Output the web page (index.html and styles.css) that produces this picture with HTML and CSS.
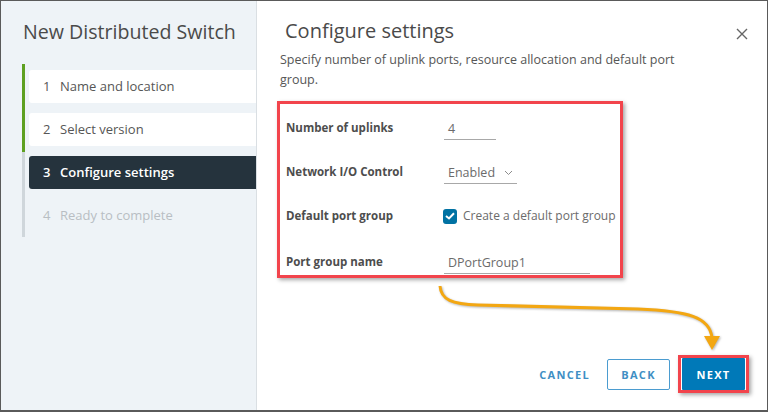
FILE: index.html
```html
<!DOCTYPE html>
<html lang="en">
<head>
    <meta charset="UTF-8">
    <title>New Distributed Switch</title>
    <link rel="stylesheet" href="styles.css">
</head>
<body>
    <div class="frame">
        <div class="sidebar">
            <h1 class="wizard-title">New Distributed Switch</h1>
            <ul class="steps">
                <li class="step done"><span class="num">1</span>Name and location</li>
                <li class="step done"><span class="num">2</span>Select version</li>
                <li class="step active"><span class="num">3</span>Configure settings</li>
                <li class="step todo"><span class="num">4</span>Ready to complete</li>
            </ul>
        </div>

        <div class="content">
            <div class="header">
                <h2 class="page-title">Configure settings</h2>
                <svg class="close" width="12" height="12" viewBox="0 0 12 12">
                    <path d="M1 1 L11 11 M11 1 L1 11" stroke="#666" stroke-width="1.4" fill="none"/>
                </svg>
            </div>
            <p class="desc">Specify number of uplink ports, resource allocation and default port group.</p>

            <div class="form highlight">
                <div class="row">
                    <label>Number of uplinks</label>
                    <div class="field short">4</div>
                </div>
                <div class="row">
                    <label>Network I/O Control</label>
                    <div class="field select">Enabled
                        <svg width="9" height="6" viewBox="0 0 9 6"><path d="M1 1 L4.5 4.5 L8 1" stroke="#8c8c8c" stroke-width="1" fill="none"/></svg>
                    </div>
                </div>
                <div class="row">
                    <label>Default port group</label>
                    <div class="check">
                        <span class="box">
                            <svg width="10" height="8" viewBox="0 0 10 8"><path d="M1 4 L4 6.5 L9 1.2" stroke="#fff" stroke-width="2" fill="none"/></svg>
                        </span>
                        Create a default port group
                    </div>
                </div>
                <div class="row last">
                    <label>Port group name</label>
                    <div class="field long">DPortGroup1</div>
                </div>
            </div>

            <div class="footer">
                <span class="btn link">CANCEL</span>
                <span class="btn outline">BACK</span>
                <span class="highlight next-wrap"><span class="btn primary">NEXT</span></span>
            </div>

            <!-- annotation arrow -->
            <svg class="arrow" width="300" height="80" viewBox="0 0 300 80">
                <path d="M2 2 C 3 16, 14 20, 40 21 L 200 25 C 250 27, 272 33, 274 54" stroke="#f3a712" stroke-width="3" fill="none"/>
                <path d="M266 52 L 282 52 L 274 66 Z" fill="#f3a712"/>
            </svg>
        </div>
    </div>
</body>
</html>
```

FILE: styles.css
```css
* {
    box-sizing: border-box;
}

body {
    margin: 0;
    width: 768px;
    height: 412px;
    font-family: 'Open Sans', sans-serif;
    color: #565656;
    overflow: hidden;
}

.frame {
    display: flex;
    width: 768px;
    height: 412px;
    border: 1px solid #5a5a5a;
    border-bottom-width: 2px;
}

.sidebar {
    width: 256px;
    flex-shrink: 0;
    background: #eef3f7;
    border-right: 1px solid #dadfe3;
}

.wizard-title {
    margin: 19px 0 0 22px;
    font-size: 19.6px;
    font-weight: 400;
    color: #4a4a4a;
    line-height: 24px;
}

.steps {
    list-style: none;
    margin: 20px 0 0 21px;
    padding: 6px 0 5px 4px;
    border-left: 3px solid #cfd6db;
    position: relative;
}

.steps::before {
    content: "";
    position: absolute;
    left: -3px;
    top: 0;
    width: 3px;
    height: 88px;
    background: #5ea021;
}

.step {
    height: 33px;
    line-height: 33px;
    font-size: 13px;
    padding-left: 14px;
    margin-bottom: 10px;
    border-radius: 3px 0 0 3px;
    color: #565656;
}

.step:last-child {
    margin-bottom: 0;
}

.step .num {
    display: inline-block;
    width: 17px;
}

.step.done {
    background: #fff;
}

.step.active {
    background: #25333d;
    color: #fff;
    font-weight: 600;
}

.step.todo {
    color: #b8bec3;
}

.content {
    flex: 1;
    background: #fff;
    position: relative;
    display: flex;
    flex-direction: column;
}

.header {
    display: flex;
    justify-content: space-between;
    align-items: center;
    padding: 17px 19px 0 28px;
}

.page-title {
    margin: 0;
    font-size: 20px;
    font-weight: 400;
    color: #4a4a4a;
    line-height: 26px;
}

.close {
    margin-top: 6px;
}

.desc {
    margin: 6px 0 0 23px;
    width: 412px;
    font-size: 12.5px;
    line-height: 20px;
}

.highlight {
    border: 3px solid #f2444c;
    box-shadow: 2px 2px 4px rgba(0, 0, 0, 0.35);
}

.form {
    margin: 11px 0 0 20px;
    width: 346px;
    height: 177px;
    padding: 15px 0 0 6px;
}

.row {
    display: flex;
    align-items: flex-start;
    height: 44px;
}

.row.last {
    margin-top: 2px;
}

.row label {
    width: 158px;
    font-size: 11.5px;
    font-weight: 700;
    color: #4d4d4d;
    line-height: 18px;
}

.field {
    font-size: 12.5px;
    color: #6b6b6b;
    padding: 1px 0 1px 4px;
    border-bottom: 1px solid #a8a8a8;
    line-height: 18px;
}

.field.short {
    width: 52px;
}

.field.select {
    width: 73px;
    display: flex;
    align-items: center;
    gap: 9px;
}

.field.long {
    width: 146px;
}

.check {
    display: flex;
    align-items: center;
    gap: 6px;
    font-size: 12px;
    color: #6b6b6b;
    line-height: 18px;
    margin-left: -1px;
    white-space: nowrap;
}

.box {
    width: 14px;
    height: 15px;
    border-radius: 3px;
    background: #0072a3;
    display: flex;
    align-items: center;
    justify-content: center;
}

.footer {
    margin-top: auto;
    display: flex;
    justify-content: flex-end;
    align-items: center;
    padding: 0 18px 17px 0;
}

.btn {
    display: inline-flex;
    align-items: center;
    justify-content: center;
    height: 31px;
    font-size: 11px;
    font-weight: 700;
    letter-spacing: 0.12em;
    border-radius: 2px;
}

.btn.link {
    color: #3f8fc4;
    margin-right: 17px;
}

.btn.outline {
    width: 63px;
    border: 1px solid #4b9cd0;
    color: #3f8fc4;
    margin-right: 8px;
}

.next-wrap {
    display: inline-flex;
    padding: 0 1px;
    background: #fff;
}

.btn.primary {
    width: 63px;
    height: 32px;
    background: #0079b8;
    color: #fff;
    border-radius: 1px;
}

.arrow {
    position: absolute;
    left: 181px;
    top: 283px;
    filter: drop-shadow(1px 1px 1px rgba(0, 0, 0, 0.3));
}
```
